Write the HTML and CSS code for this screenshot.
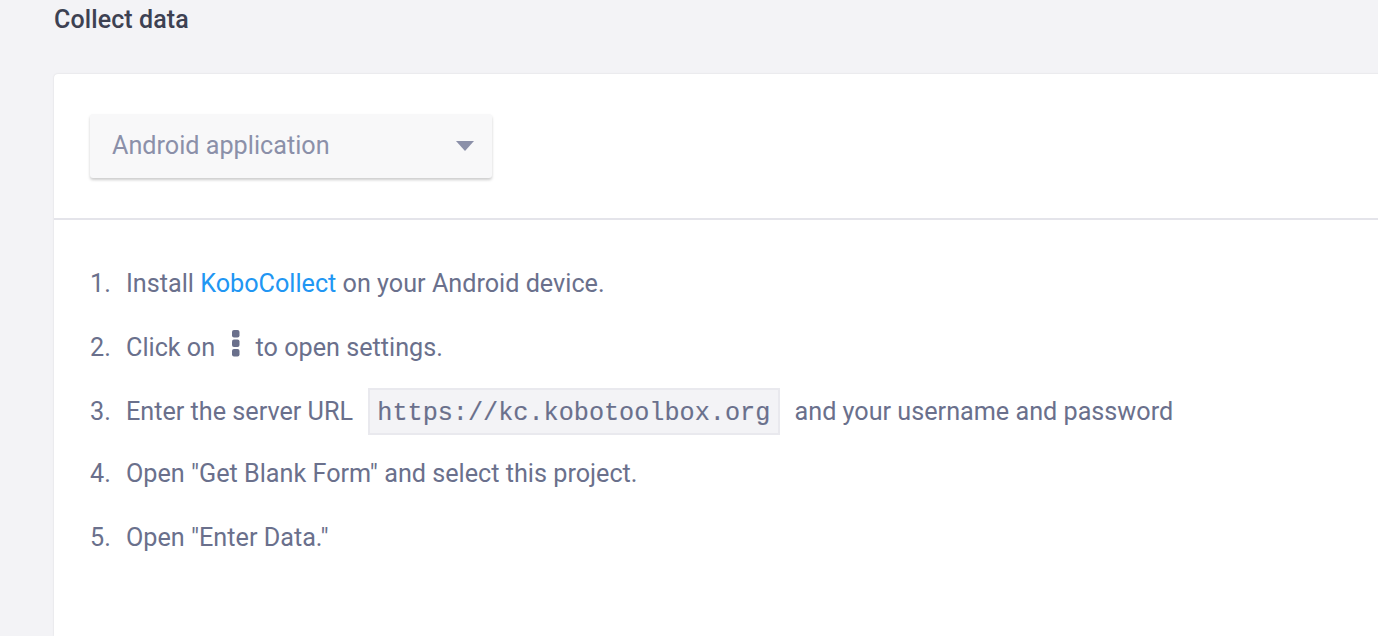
FILE: index.html
```html
<!DOCTYPE html>
<html>

<head>
    <title>Collect data</title>
    <link rel="stylesheet" href="styles.css">
</head>

<body>
    <div class="page">
        <h1 class="page-title">Collect data</h1>

        <div class="card">
            <div class="card-top">
                <div class="select">
                    <span class="select-label">Android application</span>
                    <span class="select-arrow"></span>
                </div>
            </div>

            <ol class="steps">
                <li>Install <a href="#">KoboCollect</a> on your Android device.</li>
                <li>Click on <svg class="dots" width="10" height="28" viewBox="0 0 10 28">
                        <rect x="2" y="0" width="7.5" height="7.5" rx="2" />
                        <rect x="2" y="9.5" width="7.5" height="7.5" rx="2" />
                        <rect x="2" y="19" width="7.5" height="7.5" rx="2" />
                    </svg> to open settings.</li>
                <li class="step-code">Enter the server URL <code>https://kc.kobotoolbox.org</code> and your username and password</li>
                <li>Open "Get Blank Form" and select this project.</li>
                <li>Open "Enter Data."</li>
            </ol>
        </div>
    </div>
</body>
</html>
```

FILE: styles.css
```css
html, body {
    margin: 0;
    height: 100%;
    overflow: hidden;
}

body {
    font-family: Roboto, Arial, sans-serif;
    background-color: #f3f3f6;
    color: #6a708c;
}

.page {
    padding-left: 54px;
}

.page-title {
    margin: 0;
    height: 74px;
    padding-top: 5px;
    box-sizing: border-box;
    font-size: 25px;
    line-height: 30px;
    font-weight: 500;
    letter-spacing: 0.1px;
    color: #3d4152;
}

.card {
    margin-right: -20px;
    height: 562px;
    background-color: #fff;
    border-radius: 4px 0 0 0;
    box-shadow: 0 0 2px rgba(0, 0, 0, 0.12);
}

.card-top {
    height: 146px;
    padding: 40px 36px 0;
    box-sizing: border-box;
    border-bottom: 2px solid #e4e4ea;
}

.select {
    display: flex;
    align-items: center;
    justify-content: space-between;
    width: 402px;
    height: 64px;
    padding: 0 18px 0 22px;
    box-sizing: border-box;
    background-color: #f8f8f9;
    border-radius: 3px;
    box-shadow: 0 2px 3px rgba(0, 0, 0, 0.2);
    font-size: 25.2px;
    color: #8b90a9;
}

.select-label {
    padding-bottom: 2px;
}

.select-arrow {
    width: 0;
    height: 0;
    border-left: 9px solid transparent;
    border-right: 9px solid transparent;
    border-top: 10px solid #8b90a9;
}

.steps {
    margin: 0;
    padding: 44px 0 0 36px;
    list-style: none;
    counter-reset: step;
    font-size: 25.2px;
}

.steps li {
    height: 64px;
    line-height: 40px;
    counter-increment: step;
}

.steps li::before {
    content: counter(step) ".";
    display: inline-block;
    width: 36px;
}

.steps .step-code {
    height: 62px;
}

.steps a {
    color: #2196f3;
    text-decoration: none;
}

.dots {
    margin: 0 9px;
    vertical-align: -2px;
    fill: #6a708c;
}

code {
    margin: 0 8px 0 9px;
    padding: 9px 8px 5px 7px;
    font-family: "Liberation Mono", monospace;
    font-size: 25.2px;
    -webkit-text-stroke: 0.15px #6a708c;
    background-color: #f3f3f6;
    border: 2px solid #e9e9ee;
}
```
